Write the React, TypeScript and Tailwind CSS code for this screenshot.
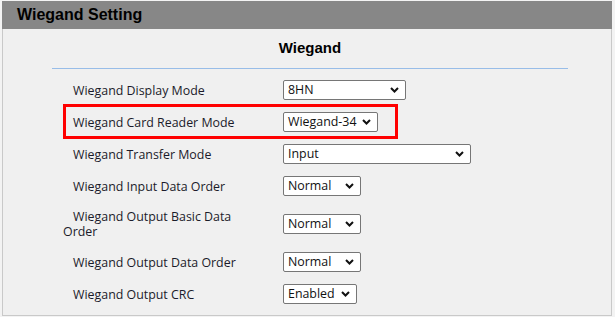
import React from "react";

type Row = {
  label: string;
  value: string;
  width: string;
  tall?: boolean;
  marked?: boolean;
};

const rows: Row[] = [
  { label: "Wiegand Display Mode", value: "8HN", width: "w-[123px]" },
  { label: "Wiegand Card Reader Mode", value: "Wiegand-34", width: "w-[95px]", marked: true },
  { label: "Wiegand Transfer Mode", value: "Input", width: "w-[188px]" },
  { label: "Wiegand Input Data Order", value: "Normal", width: "w-[78px]" },
  { label: "Wiegand Output Basic Data Order", value: "Normal", width: "w-[78px]", tall: true },
  { label: "Wiegand Output Data Order", value: "Normal", width: "w-[78px]" },
  { label: "Wiegand Output CRC", value: "Enabled", width: "w-[74px]" },
];

function Chevron() {
  return (
    <svg width="9" height="6" viewBox="0 0 9 6" className="shrink-0">
      <path d="M1 1 L4.5 4.5 L8 1" fill="none" stroke="#111" strokeWidth="2" />
    </svg>
  );
}

function Select({ value, width }: { value: string; width: string }) {
  return (
    <div
      className={`${width} h-[20px] flex items-center justify-between pl-[4px] pr-[6px] bg-white border border-[#767676] rounded-[2px] text-[12.4px] text-[#111] leading-none`}
    >
      <span>{value}</span>
      <Chevron />
    </div>
  );
}

export default function App() {
  return (
    <div
      className="w-[615px] h-[317px] bg-[#f3f3f3] pt-[1px] pl-[2px] pr-[3px]"
      style={{ fontFamily: '"Open Sans", "Noto Sans", sans-serif' }}
    >
      <div className="h-[28px] bg-[#878787] flex items-center pl-[15px]">
        <span
          className="text-[16px] font-bold text-black"
          style={{ fontFamily: '"Liberation Sans", Arial, sans-serif' }}
        >
          Wiegand Setting
        </span>
      </div>
      <div className="h-[287px] border-x border-b border-[#c9c9c9] bg-[#f0f0f0]">
        <div className="ml-[49px] w-[516px]">
          <div
            className="h-[39px] flex items-end justify-center pb-[9px] text-[15px] font-bold text-black"
            style={{ fontFamily: '"Liberation Sans", Arial, sans-serif' }}
          >
            Wiegand
          </div>
          <div className="h-[1px] bg-[#98bde8]" />
        </div>
        <div className="pt-[5px]">
          {rows.map((r, i) => (
            <div
              key={i}
              className={`relative flex items-center ${r.tall ? "h-[44px]" : "h-[32px]"}`}
            >
              <div className="ml-[60px] w-[190px] mr-[30px] indent-[10px] text-[12.4px] leading-[15px] text-[#1b1b2a]">
                {r.label}
              </div>
              <Select value={r.value} width={r.width} />
              {r.marked && (
                <div className="absolute left-[60px] top-[-2px] w-[335px] h-[35px] border-[3px] border-[#ff0000]" />
              )}
            </div>
          ))}
        </div>
      </div>
    </div>
  );
}
